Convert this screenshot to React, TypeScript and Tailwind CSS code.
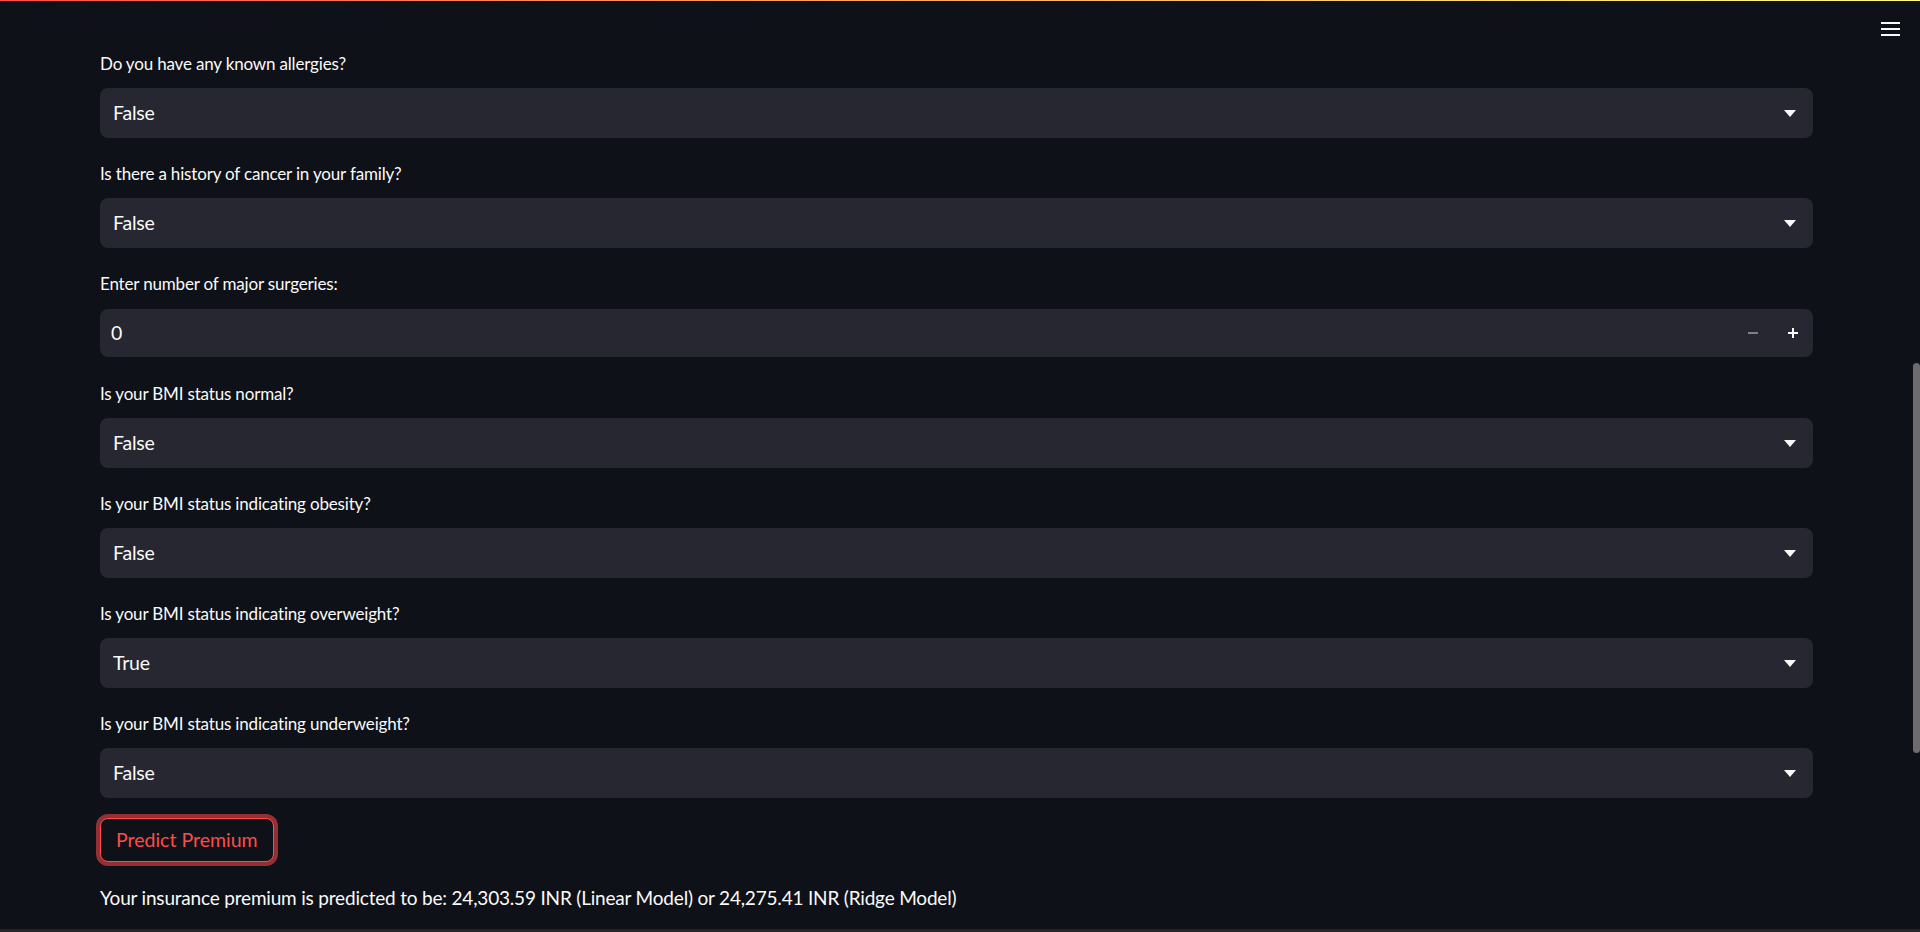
import React from "react";

type Field =
  | { kind: "select"; label: string; value: string }
  | { kind: "number"; label: string; value: string };

const fields: Field[] = [
  { kind: "select", label: "Do you have any known allergies?", value: "False" },
  { kind: "select", label: "Is there a history of cancer in your family?", value: "False" },
  { kind: "number", label: "Enter number of major surgeries:", value: "0" },
  { kind: "select", label: "Is your BMI status normal?", value: "False" },
  { kind: "select", label: "Is your BMI status indicating obesity?", value: "False" },
  { kind: "select", label: "Is your BMI status indicating overweight?", value: "True" },
  { kind: "select", label: "Is your BMI status indicating underweight?", value: "False" },
];

function Caret() {
  return (
    <svg width="12" height="7" viewBox="0 0 12 7" className="shrink-0">
      <path d="M0 0 H12 L6 7 Z" fill="#fafafa" />
    </svg>
  );
}

function SelectBox({ label, value }: { label: string; value: string }) {
  return (
    <div className="flex flex-col">
      <label className="h-[32px] mb-[8px] flex items-center text-[17px] tracking-[-0.01em] text-[#fafafa]">
        {label}
      </label>
      <div className="h-[50px] rounded-[8px] bg-[#262730] flex items-center justify-between pl-[13px] pr-[17px]">
        <span className="text-[19.5px] tracking-[-0.01em] text-[#fafafa]">{value}</span>
        <Caret />
      </div>
    </div>
  );
}

function NumberBox({ label, value }: { label: string; value: string }) {
  return (
    <div className="flex flex-col">
      <label className="h-[32px] mb-[9px] flex items-center text-[17px] tracking-[-0.01em] text-[#fafafa]">
        {label}
      </label>
      <div className="h-[48px] mb-[1px] rounded-[8px] bg-[#262730] flex items-center">
        <span className="flex-1 pl-[11px] text-[19.5px] text-[#fafafa]">{value}</span>
        <button className="w-[40px] h-full flex items-center justify-center">
          <span className="block w-[10px] h-[2px] bg-[#7d7f8c]" />
        </button>
        <button className="w-[40px] h-full flex items-center justify-center relative">
          <span className="block w-[10px] h-[2px] bg-[#fafafa]" />
          <span className="absolute w-[2px] h-[10px] bg-[#fafafa]" />
        </button>
      </div>
    </div>
  );
}

export default function App() {
  return (
    <div
      className="relative h-[932px] overflow-hidden bg-[#0e1117] flex flex-col"
      style={{ fontFamily: "Lato, 'Liberation Sans', sans-serif" }}
    >
      {/* top decoration line */}
      <div className="h-[1px] bg-gradient-to-r from-[#ff4b4b] to-[#fffd80]" />

      {/* hamburger */}
      <button className="absolute right-[20px] top-[22px] flex flex-col gap-[4px]">
        <span className="block w-[19px] h-[2px] bg-[#fafafa]" />
        <span className="block w-[19px] h-[2px] bg-[#fafafa]" />
        <span className="block w-[19px] h-[2px] bg-[#fafafa]" />
      </button>

      <div className="flex-1 flex">
        <main className="flex-1 pl-[100px] pr-[100px] pt-[47px] flex flex-col gap-[20px]">
          {fields.map((f) =>
            f.kind === "select" ? (
              <SelectBox key={f.label} label={f.label} value={f.value} />
            ) : (
              <NumberBox key={f.label} label={f.label} value={f.value} />
            )
          )}

          <div>
            <button className="h-[44px] px-[15px] rounded-[8px] border border-[#ff4b4b] bg-[#0e1117] text-[#ff4b4b] text-[19.5px] shadow-[0_0_0_4px_rgba(255,75,75,0.55)]">
              Predict Premium
            </button>
          </div>

          <p className="text-[19px] tracking-[-0.01em] leading-[32px] text-[#fafafa]">
            Your insurance premium is predicted to be: 24,303.59 INR (Linear Model) or 24,275.41 INR (Ridge Model)
          </p>
        </main>

        {/* scrollbar */}
        <div className="w-[7px] relative">
          <div className="absolute left-0 right-0 top-[362px] h-[390px] rounded-full bg-[#6b6b70]" />
        </div>
      </div>

      <div className="h-[3px] bg-[#262626]" />
    </div>
  );
}
